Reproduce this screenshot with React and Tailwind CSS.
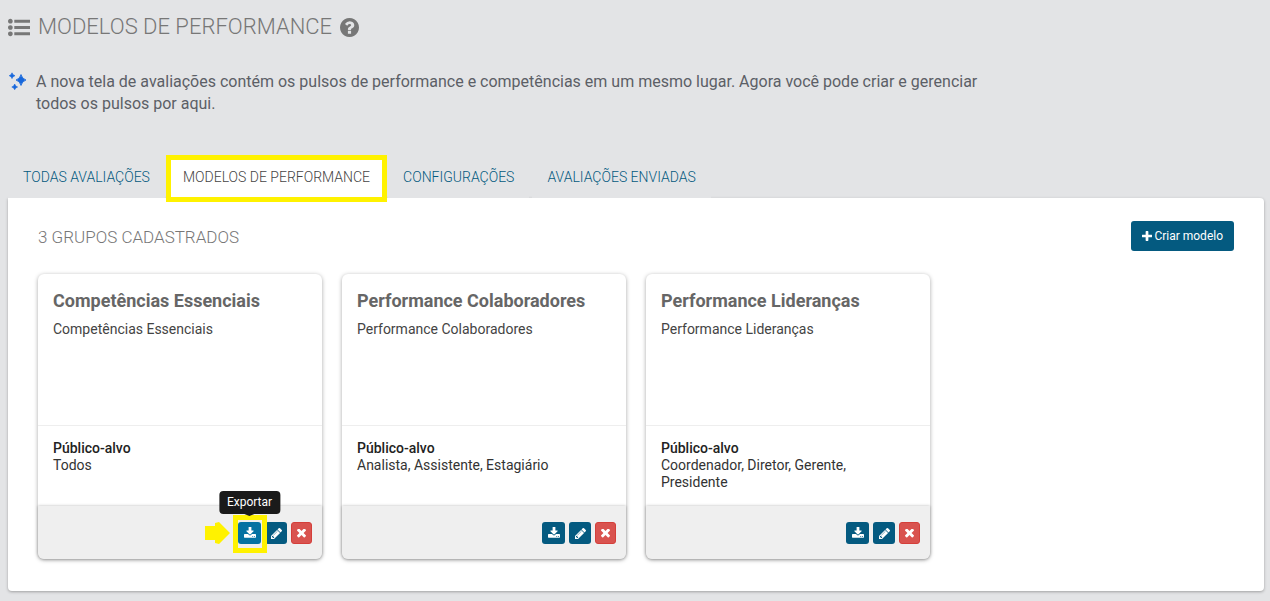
import React from "react";

const ICONS = {
  list: {
    viewBox: "0 128 1792 1536",
    d: "M384 1408q0 80-56 136t-136 56-136-56-56-136 56-136 136-56 136 56 56 136zm0-512q0 80-56 136t-136 56-136-56-56-136 56-136 136-56 136 56 56 136zm1408 416v192q0 13-9.5 22.5t-22.5 9.5h-1216q-13 0-22.5-9.5t-9.5-22.5v-192q0-13 9.5-22.5t22.5-9.5h1216q13 0 22.5 9.5t9.5 22.5zm-1408-928q0 80-56 136t-136 56-136-56-56-136 56-136 136-56 136 56 56 136zm1408 416v192q0 13-9.5 22.5t-22.5 9.5h-1216q-13 0-22.5-9.5t-9.5-22.5v-192q0-13 9.5-22.5t22.5-9.5h1216q13 0 22.5 9.5t9.5 22.5zm0-512v192q0 13-9.5 22.5t-22.5 9.5h-1216q-13 0-22.5-9.5t-9.5-22.5v-192q0-13 9.5-22.5t22.5-9.5h1216q13 0 22.5 9.5t9.5 22.5z",
  },
  help: {
    viewBox: "128 128 1536 1536",
    d: "M1024 1376v-192q0-14-9-23t-23-9h-192q-14 0-23 9t-9 23v192q0 14 9 23t23 9h192q14 0 23-9t9-23zm256-672q0-88-55.5-163t-138.5-116-170-41q-243 0-371 213-15 24 8 42l132 100q7 6 19 6 16 0 25-12 53-68 86-92 34-24 86-24 48 0 85.5 26t37.5 59q0 38-20 61t-68 45q-63 28-115.5 86.5t-52.5 125.5v36q0 14 9 23t23 9h192q14 0 23-9t9-23q0-19 21.5-49.5t54.5-49.5q32-18 49-28.5t46-35 44.5-48 28-60.5 12.5-81zm384 192q0 209-103 385.5t-279.5 279.5-385.5 103-385.5-103-279.5-279.5-103-385.5 103-385.5 279.5-279.5 385.5-103 385.5 103 279.5 279.5 103 385.5z",
  },
  plus: {
    viewBox: "192 128 1408 1408",
    d: "M1600 736v192q0 40-28 68t-68 28h-416v416q0 40-28 68t-68 28h-192q-40 0-68-28t-28-68v-416h-416q-40 0-68-28t-28-68v-192q0-40 28-68t68-28h416v-416q0-40 28-68t68-28h192q40 0 68 28t28 68v416h416q40 0 68 28t28 68z",
  },
  download: {
    viewBox: "64 64 1664 1472",
    d: "M1344 1344q0-26-19-45t-45-19-45 19-19 45 19 45 45 19 45-19 19-45zm256 0q0-26-19-45t-45-19-45 19-19 45 19 45 45 19 45-19 19-45zm128-224v320q0 40-28 68t-68 28h-1472q-40 0-68-28t-28-68v-320q0-40 28-68t68-28h465l135 136q58 56 136 56t136-56l136-136h464q40 0 68 28t28 68zm-325-569q17 41-14 70l-448 448q-18 19-45 19t-45-19l-448-448q-31-29-14-70 17-39 59-39h256v-448q0-26 19-45t45-19h256q26 0 45 19t19 45v448h256q42 0 59 39z",
  },
  pencil: {
    viewBox: "128 149 1515 1515",
    d: "M491 1536l91-91-235-235-91 91v107h128v128h107zm523-928q0-22-22-22-10 0-17 7l-542 542q-7 7-7 17 0 22 22 22 10 0 17-7l542-542q7-7 7-17zm-54-192l416 416-832 832h-416v-416zm683 96q0 53-37 90l-166 166-416-416 166-165q36-38 90-38 53 0 91 38l235 234q37 39 37 91z",
  },
  times: {
    viewBox: "302 434 1188 1188",
    d: "M1490 1322q0 40-28 68l-136 136q-28 28-68 28t-68-28l-294-294-294 294q-28 28-68 28t-68-28l-136-136q-28-28-28-68t28-68l294-294-294-294q-28-28-28-68t28-68l136-136q28-28 68-28t68 28l294 294 294-294q28-28 68-28t68 28l136 136q28 28 28 68t-28 68l-294 294 294 294q28 28 28 68z",
  },
};

const Icon = ({ name, className }) => (
  <svg viewBox={ICONS[name].viewBox} fill="currentColor" className={className} aria-hidden="true">
    <path d={ICONS[name].d} />
  </svg>
);

const Sparkles = () => (
  <svg viewBox="0 0 18 18" fill="#1767dc" className="mt-px w-[18px] h-[18px] shrink-0" aria-hidden="true">
    <path d="M13 2.5Q14 6.7 18 8Q14 9.3 13 13.5Q12 9.3 8 8Q12 6.7 13 2.5Z" stroke="#1767dc" strokeWidth="0.8" strokeLinejoin="round" />
    <path d="M4 0.8Q4.5 3.1 7 3.7Q4.5 4.3 4 6.6Q3.5 4.3 1.2 3.7Q3.5 3.1 4 0.8Z" stroke="#1767dc" strokeWidth="0.6" strokeLinejoin="round" />
    <path d="M6.7 12Q7.2 14.4 9.6 15Q7.2 15.6 6.7 17.7Q6.2 15.6 3.8 15Q6.2 14.4 6.7 12Z" stroke="#1767dc" strokeWidth="0.6" strokeLinejoin="round" />
  </svg>
);

const tabs = [
  { label: "Todas avaliações" },
  { label: "Modelos de performance", active: true },
  { label: "Configurações" },
  { label: "Avaliações enviadas" },
];

const models = [
  { name: "Competências Essenciais", audience: "Todos", exporting: true },
  { name: "Performance Colaboradores", audience: "Analista, Assistente, Estagiário" },
  { name: "Performance Lideranças", audience: "Coordenador, Diretor, Gerente, Presidente" },
];

const Tab = ({ label, active }) => (
  <li className={active ? "relative z-10" : "bg-[#e3e4e6]"}>
    {active && (
      <span className="absolute -inset-x-0.5 -top-px -bottom-1 bg-white border-5 border-[#fff200]"></span>
    )}
    <a
      href="#"
      className={`relative block px-[15px] py-[11px] text-sm font-light uppercase ${
        active ? "text-[#444]" : "text-[#045a80]"
      }`}
    >
      {label}
    </a>
  </li>
);

const ExportButton = ({ highlighted }) => (
  <div className="relative">
    {highlighted && (
      <>
        <svg viewBox="0 0 25 22" fill="#fff200" className="absolute right-full top-0 mr-2 w-[25px] h-[22px]" aria-hidden="true">
          <path d="M0 4H10V1L14 0L25 11L14 22L10 21V18H0Z" />
        </svg>
        <span className="absolute z-10 -left-[5px] -right-1.5 -top-[7px] -bottom-[9px] border-5 border-[#fff200]"></span>
        <span
          role="tooltip"
          className="absolute bottom-full left-1/2 z-20 mb-2 -translate-x-1/2 rounded bg-[#1a1a1a] px-2 py-[3px] text-xs leading-[17px] text-white"
        >
          Exportar
          <span className="absolute left-1/2 top-full -translate-x-1/2 border-x-5 border-t-2 border-x-transparent border-t-[#1a1a1a]"></span>
        </span>
      </>
    )}
    <button
      aria-label="Exportar"
      className={`flex w-[23px] h-[22px] items-center justify-center rounded-[3px] pb-0.5 text-white ${
        highlighted ? "bg-[#0472a2]" : "bg-[#045a80]"
      }`}
    >
      <Icon name="download" className="w-3 h-[11px]" />
    </button>
  </div>
);

const ModelCard = ({ name, audience, exporting }) => (
  <div className="flex flex-col rounded-md bg-white shadow-[0_1px_4px_rgba(0,0,0,0.35)]">
    <div className="min-h-[152px] border-b border-[#eee] px-[15px] pt-4">
      <h3 className="text-lg leading-[22px] font-bold text-[#666]">{name}</h3>
      <p className="mt-[7px] text-sm text-[#444]">{name}</p>
    </div>
    <div className="min-h-20 grow px-[15px] pt-3.5 text-sm leading-[17px] text-[#333]">
      <h4 className="font-medium text-[#222]">Público-alvo</h4>
      <p>{audience}</p>
    </div>
    <div className="flex justify-end gap-1 rounded-b-md bg-[#efefef] px-2.5 pt-4 pb-[15px] shadow-[0_0_3px_rgba(0,0,0,0.3)]">
      <ExportButton highlighted={exporting} />
      <button aria-label="Editar" className="flex w-[22px] h-[22px] items-center justify-center rounded-[3px] bg-[#045a80] text-white">
        <Icon name="pencil" className="w-[11px] h-[11px]" />
      </button>
      <button aria-label="Excluir" className="flex w-[21px] h-[22px] items-center justify-center rounded-[3px] border border-[#d43f3a] bg-[#d9534f] text-white">
        <Icon name="times" className="w-[9px] h-[9px]" />
      </button>
    </div>
  </div>
);

const App = () => {
  return (
    <div className="min-h-screen bg-[#e3e4e6] pl-2 pr-1.5 pt-3 pb-2.5 font-[Roboto,sans-serif]">
      <h1 className="flex items-center gap-2 text-[22px] leading-[30px] font-light uppercase text-[#777]">
        <Icon name="list" className="w-[22px] h-[19px]" />
        Modelos de performance
        <Icon name="help" className="w-[19px] h-[19px]" />
      </h1>

      <div className="mt-[29px] flex max-w-[980px] gap-2.5">
        <Sparkles />
        <p className="text-base leading-[22px] text-[#5c5f66]">
          A nova tela de avaliações contém os pulsos de performance e competências em um mesmo lugar. Agora você pode criar e gerenciar todos os pulsos por aqui.
        </p>
      </div>

      <div className="relative mt-[41px]">
        <ul className="relative z-10 flex gap-[3px]">
          {tabs.map((tab) => (
            <Tab key={tab.label} {...tab} />
          ))}
        </ul>

        <div className="rounded-b rounded-tr bg-white px-[30px] pt-[23px] pb-8 shadow-[0_1px_3px_rgba(0,0,0,0.3)]">
          <div className="flex items-center justify-between">
            <h2 className="pt-0.5 text-[17px] leading-6 font-light uppercase text-[#777]">3 grupos cadastrados</h2>
            <button className="flex h-[30px] items-center gap-0.5 rounded-[3px] bg-[#045a80] px-[11px] text-xs text-white">
              <Icon name="plus" className="w-2.5 h-2.5" />
              Criar modelo
            </button>
          </div>

          <div className="mt-[23px] grid grid-cols-4 gap-5">
            {models.map((model) => (
              <ModelCard key={model.name} {...model} />
            ))}
          </div>
        </div>
      </div>
    </div>
  );
};

export default App;
